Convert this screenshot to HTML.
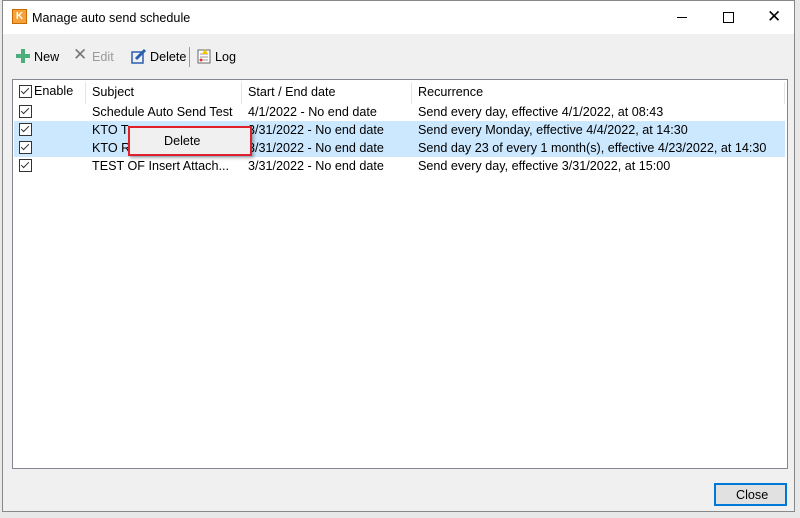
<!DOCTYPE html>
<html><head><style>
body{margin:0;width:800px;height:518px;overflow:hidden;background:#e8e8e8;font-family:"Liberation Sans",sans-serif;font-size:12.6px;color:#000;position:relative}
.win{position:absolute;left:2px;top:0;width:793px;height:512px;background:#f0f0f0;border:1px solid #888;box-sizing:border-box}
.title{position:absolute;left:0;top:0;right:0;height:33px;background:#fff}
.t{position:absolute;white-space:nowrap}
.list{position:absolute;left:9px;top:78px;width:776px;height:390px;background:#fff;border:1px solid #828790;box-sizing:border-box}
.cb{position:absolute;width:11px;height:11px;border:1px solid #333;background:#fff}
.cb:after{content:"";position:absolute;left:3px;top:0px;width:3px;height:7px;border:solid #333;border-width:0 1.5px 1.5px 0;transform:rotate(45deg)}
.sep{position:absolute;top:2px;width:1px;height:22px;background:#e5e5e5}
.sel{position:absolute;left:1px;width:771px;height:18px;background:#cce8ff}
</style></head><body>
<div class="win">
<div class="title">
 <div style="position:absolute;left:9px;top:8px;width:15px;height:15px;background:#f6a23a;border:1px solid #c76b00;box-sizing:border-box;font-size:10px;color:#fff;font-weight:bold;line-height:13px;text-align:center">K</div>
 <div class="t" style="left:29px;top:10px">Manage auto send schedule</div>
 <div style="position:absolute;left:674px;top:16px;width:10px;height:1px;background:#000"></div>
 <div style="position:absolute;left:720px;top:11px;width:9px;height:9px;border:1px solid #000"></div>
 <div class="t" style="left:764px;top:6px;font-size:17px">✕</div>
</div>
<svg style="position:absolute;left:13px;top:48px" width="14" height="14"><rect x="5" y="0" width="4" height="14" fill="#4caf7a"/><rect x="0" y="5" width="14" height="4" fill="#4caf7a"/></svg>
<div class="t" style="left:31px;top:49px">New</div>
<div class="t" style="left:70px;top:44px;font-size:17px;color:#777">✕</div>
<div class="t" style="left:89px;top:49px;color:#999">Edit</div>
<svg style="position:absolute;left:128px;top:47px" width="16" height="16"><rect x="1" y="4" width="11" height="11" fill="none" stroke="#2a5fb0" stroke-width="1.5"/><path d="M5 11 L14 2" stroke="#2a5fb0" stroke-width="3"/></svg>
<div class="t" style="left:147px;top:49px">Delete</div>
<div style="position:absolute;left:186px;top:46px;width:1px;height:20px;background:#999"></div>
<svg style="position:absolute;left:194px;top:47px" width="14" height="16"><rect x="1" y="2" width="12" height="13" fill="#fff" stroke="#666"/><path d="M3 6h8M3 9h8M3 12h8" stroke="#999"/><path d="M8 1l3 5h-6z" fill="#f5c400"/><circle cx="4" cy="12" r="1.5" fill="#d33"/></svg>
<div class="t" style="left:212px;top:49px">Log</div>
<div class="list">
 <div class="sep" style="left:72px"></div><div class="sep" style="left:228px"></div><div class="sep" style="left:398px"></div><div class="sep" style="left:771px"></div>
 <div class="cb" style="left:6px;top:5px"></div>
 <div class="t" style="left:21px;top:4px">Enable</div>
 <div class="t" style="left:79px;top:5px">Subject</div>
 <div class="t" style="left:235px;top:5px">Start / End date</div>
 <div class="t" style="left:405px;top:5px">Recurrence</div>
 <div class="sel" style="top:41px"></div><div class="sel" style="top:59px"></div>
 <div class="cb" style="left:6px;top:25px"></div><div class="cb" style="left:6px;top:43px"></div><div class="cb" style="left:6px;top:61px"></div><div class="cb" style="left:6px;top:79px"></div>
 <div class="t" style="left:79px;top:25px">Schedule Auto Send Test</div>
 <div class="t" style="left:235px;top:25px">4/1/2022 - No end date</div>
 <div class="t" style="left:405px;top:25px">Send every day, effective 4/1/2022, at 08:43</div>
 <div class="t" style="left:79px;top:43px">KTO T</div>
 <div class="t" style="left:235px;top:43px">3/31/2022 - No end date</div>
 <div class="t" style="left:405px;top:43px">Send every Monday, effective 4/4/2022, at 14:30</div>
 <div class="t" style="left:79px;top:61px">KTO R</div>
 <div class="t" style="left:235px;top:61px">3/31/2022 - No end date</div>
 <div class="t" style="left:405px;top:61px">Send day 23 of every 1 month(s), effective 4/23/2022, at 14:30</div>
 <div class="t" style="left:79px;top:79px">TEST OF Insert Attach...</div>
 <div class="t" style="left:235px;top:79px">3/31/2022 - No end date</div>
 <div class="t" style="left:405px;top:79px">Send every day, effective 3/31/2022, at 15:00</div>
 <div style="position:absolute;left:115px;top:46px;width:124px;height:30px;background:#f0f0f0;border:2px solid #e0202c;box-sizing:border-box;box-shadow:2px 2px 3px rgba(0,0,0,.3)"><div class="t" style="left:34px;top:6px">Delete</div></div>
</div>
<div style="position:absolute;left:711px;top:482px;width:73px;height:23px;background:#e1e1e1;border:2px solid #0078d7;box-sizing:border-box"><div class="t" style="left:20px;top:3px">Close</div></div>
</div>
</body></html>
